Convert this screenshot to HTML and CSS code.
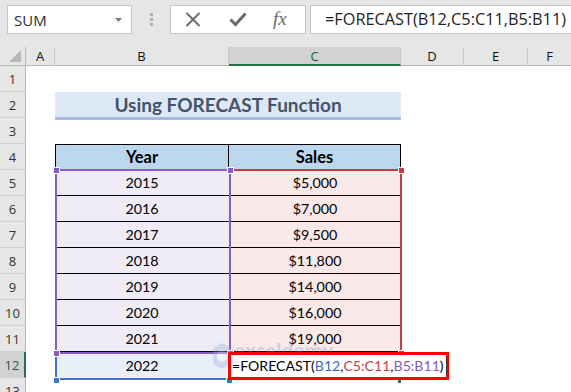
FILE: index.html
```html
<!DOCTYPE html>
<html>
<head>
<meta charset="utf-8">
<link rel="stylesheet" href="styles.css">
</head>
<body>
<div class="toolbar">
  <div class="namebox">
    <span class="nb-text">SUM</span>
    <svg class="nb-arrow" width="7" height="4" viewBox="0 0 7 4"><path d="M0 0H7L3.5 4Z" fill="#7a7a7a"/></svg>
  </div>
  <div class="grip"><i></i><i></i><i></i></div>
  <div class="fxbox">
    <svg class="ic-x" width="16" height="15" viewBox="0 0 16 15"><path d="M1.5 1L14.5 14M14.5 1L1.5 14" stroke="#6b6b6b" stroke-width="2" fill="none"/></svg>
    <svg class="ic-check" width="18" height="15" viewBox="0 0 18 15"><path d="M1.5 7.5L6.5 12.5L16.5 1.5" stroke="#6b6b6b" stroke-width="3" fill="none"/></svg>
    <span class="ic-fx">fx</span>
  </div>
  <div class="formula">=FORECAST(B12,C5:C11,B5:B11)</div>
</div>

<div class="sheet">
  <div class="corner"><span class="tri"></span></div>
  <div class="ch">A</div><div class="ch">B</div><div class="ch sel">C</div><div class="ch">D</div><div class="ch">E</div><div class="ch last">F</div>

  <div class="rh">1</div><div></div><div></div><div></div><div></div><div></div><div></div>
  <div class="rh">2</div><div></div><div class="title">Using FORECAST Function</div><div></div><div></div><div></div>
  <div class="rh">3</div><div></div><div></div><div></div><div></div><div></div><div></div>
  <div class="rh">4</div><div></div><div class="th thb">Year</div><div class="th">Sales</div><div></div><div></div><div></div>
  <div class="rh">5</div><div></div><div class="td tdb">2015</div><div class="td tdc">$5,000</div><div></div><div></div><div></div>
  <div class="rh">6</div><div></div><div class="td tdb">2016</div><div class="td tdc">$7,000</div><div></div><div></div><div></div>
  <div class="rh">7</div><div></div><div class="td tdb">2017</div><div class="td tdc">$9,500</div><div></div><div></div><div></div>
  <div class="rh">8</div><div></div><div class="td tdb">2018</div><div class="td tdc">$11,800</div><div></div><div></div><div></div>
  <div class="rh">9</div><div></div><div class="td tdb">2019</div><div class="td tdc">$14,000</div><div></div><div></div><div></div>
  <div class="rh">10</div><div></div><div class="td tdb">2020</div><div class="td tdc">$16,000</div><div></div><div></div><div></div>
  <div class="rh">11</div><div></div><div class="td tdb">2021</div><div class="td tdc">$19,000</div><div></div><div></div><div></div>
  <div class="rh rsel">12</div><div></div><div class="td b12">2022</div><div></div><div></div><div></div><div></div>
  <div class="rh">13</div><div></div><div></div><div></div><div></div><div></div><div></div>

  <div class="rng rng-red"></div>
  <div class="rng rng-purple"></div>
  <div class="rng rng-blue"></div>

  <span class="hd hd-p" style="left:53px;top:120px"></span>
  <span class="hd hd-p" style="left:227px;top:120px"></span>
  <span class="hd hd-r" style="left:398px;top:120px"></span>
  <span class="hd hd-r" style="left:398px;top:303px"></span>
  <span class="hd hd-p" style="left:53px;top:303px"></span>
  <span class="hd hd-p" style="left:227px;top:303px"></span>
  <span class="hd hd-b" style="left:53px;top:330px"></span>
  <span class="hd hd-b" style="left:226px;top:330px"></span>

  <div class="watermark">
    <svg class="wm-logo" width="20" height="28" viewBox="0 0 20 28"><path d="M10 1L19 6V22L10 27L1 22V6Z" fill="#8fa8d8"/><path d="M10 8L15 11V17L10 20L5 17V11Z" fill="#fff"/></svg>
    <div class="wm-text"><span class="wm-name">exceldemy</span><span class="wm-sub">EXCEL · DATA · BI</span></div>
  </div>

  <div class="edit"><span class="f-k">=FORECAST(</span><span class="f-b">B12</span><span class="f-k">,</span><span class="f-r">C5:C11</span><span class="f-k">,</span><span class="f-p">B5:B11</span><span class="f-k">)</span><span class="caret"></span></div>
  <span class="gmark"></span>
</div>
</body>
</html>
```

FILE: styles.css
```css
html, body {
  margin: 0;
  padding: 0;
}
body {
  width: 571px;
  height: 392px;
  overflow: hidden;
  background: #ffffff;
  font-family: "Open Sans", "Noto Sans", sans-serif;
}

/* ---------- formula bar ---------- */
.toolbar {
  height: 47px;
  box-sizing: border-box;
  padding-top: 5px;
  background: #e6e6e6;
  display: flex;
  align-items: flex-start;
}
.namebox {
  margin-left: 7px;
  width: 125px;
  height: 29px;
  box-sizing: border-box;
  border: 1px solid #c6c6c6;
  background: #fff;
  display: flex;
  align-items: center;
  justify-content: space-between;
  padding: 0 9px 0 6px;
}
.nb-text {
  font-size: 15px;
  color: #2e2e2e;
}
.grip {
  margin-left: 18px;
  margin-top: 8px;
  display: flex;
  flex-direction: column;
  gap: 2px;
}
.grip i {
  display: block;
  width: 3px;
  height: 3px;
  background: #b3b3b3;
}
.fxbox {
  margin-left: 17px;
  width: 136px;
  height: 29px;
  box-sizing: border-box;
  border: 1px solid #c6c6c6;
  background: #fff;
  display: flex;
  align-items: center;
}
.ic-x { margin-left: 14px; }
.ic-check { margin-left: 28px; }
.ic-fx {
  margin-left: 26px;
  font-family: "Liberation Serif", "DejaVu Serif", serif;
  font-style: italic;
  font-size: 19px;
  color: #6b6b6b;
  line-height: 1;
  margin-top: -2px;
}
.formula {
  margin-left: 4px;
  flex: 1;
  height: 29px;
  box-sizing: border-box;
  border: 1px solid #c6c6c6;
  border-right: none;
  background: #fff;
  padding-left: 14px;
  font-size: 16.3px;
  line-height: 26px;
  color: #1e1e1e;
  white-space: nowrap;
}

/* ---------- sheet grid ---------- */
.sheet {
  position: relative;
  display: grid;
  grid-template-columns: 26px 29px 174px 172px 63px 64px 43px;
  grid-template-rows: 19px repeat(13, 26px);
  font-family: "Lato", "Open Sans", sans-serif;
}
.corner {
  position: relative;
  background: #e6e6e6;
  border-right: 1px solid #b9b9b9;
  border-bottom: 1px solid #b9b9b9;
  box-sizing: border-box;
}
.tri {
  position: absolute;
  right: 4px;
  bottom: 3px;
  width: 0;
  height: 0;
  border-left: 12px solid transparent;
  border-bottom: 12px solid #b7b7b7;
}
.ch {
  background: #e6e6e6;
  box-sizing: border-box;
  border-right: 1px solid #c9c9c9;
  border-bottom: 1px solid #b9b9b9;
  font-family: "Open Sans", "Noto Sans", sans-serif;
  font-size: 13px;
  color: #111;
  text-align: center;
  line-height: 18px;
}
.ch.last { border-right: none; }
.ch.sel {
  background: #d2d2d2;
  border-bottom: 2px solid #217346;
  color: #1c5e39;
}
.rh {
  background: #e6e6e6;
  box-sizing: border-box;
  border-right: 1px solid #b9b9b9;
  border-bottom: 1px solid #d0d0d0;
  font-family: "Open Sans", "Noto Sans", sans-serif;
  font-size: 13px;
  color: #333;
  text-align: center;
  line-height: 27px;
}
.rh.rsel {
  background: #d2d2d2;
  border-right: 2px solid #217346;
  color: #2a5a3c;
}

.title {
  grid-column: span 2;
  margin-bottom: -2px;
  background: #dde9f5;
  border-bottom: 3px solid #a7badf;
  color: #44546a;
  font-weight: 700;
  font-size: 19px;
  text-align: center;
  line-height: 25px;
}

.th {
  background: #bdd7ee;
  box-sizing: border-box;
  border-top: 1px solid #000;
  border-right: 1px solid #000;
  font-weight: 700;
  font-size: 16.5px;
  text-align: center;
  line-height: 25px;
  color: #000;
}
.thb { border-left: 1px solid #000; }

.td {
  box-sizing: border-box;
  text-align: center;
  font-size: 14.3px;
  line-height: 26px;
  color: #000;
}
.tdb {
  background: #efebf7;
  border-bottom: 1px solid #000;
}
.tdc {
  background: #f9e9e9;
  border-bottom: 1px solid #000;
}
.b12 {
  background: #e9eff8;
  line-height: 27px;
}

/* ---------- range highlights (overlays) ---------- */
.rng {
  position: absolute;
  box-sizing: border-box;
  pointer-events: none;
}
.rng-red {
  left: 229px;
  top: 122px;
  width: 173px;
  height: 185px;
  border: 2px solid #c43e48;
  border-left: none;
}
.rng-purple {
  left: 55px;
  top: 122px;
  width: 176px;
  height: 185px;
  border: 2px solid #855fc0;
}
.rng-blue {
  left: 55px;
  top: 307px;
  width: 176px;
  height: 26px;
  border: 2px solid #4472c4;
  border-top: none;
}
.hd {
  position: absolute;
  width: 5px;
  height: 5px;
  border: 1px solid #fff;
}
.hd-p { background: #855fc0; }
.hd-r { background: #c43e48; }
.hd-b { background: #4472c4; }

.edit {
  position: absolute;
  left: 228px;
  top: 305px;
  width: 221px;
  height: 28px;
  box-sizing: border-box;
  border: 3px solid #ff0000;
  background: rgba(255, 255, 255, 0.82);
  padding-left: 1px;
  font-size: 14.1px;
  line-height: 22px;
  white-space: nowrap;
  display: flex;
  align-items: center;
}
.f-k { color: #000; }
.f-b { color: #3a6cc4; }
.f-r { color: #c4404a; }
.f-p { color: #7f5cb8; }
.caret {
  display: inline-block;
  width: 1px;
  height: 17px;
  background: #333;
  margin-left: 2px;
}
.gmark {
  position: absolute;
  left: 398px;
  top: 333px;
  width: 3px;
  height: 3px;
  background: #217346;
}

.watermark {
  position: absolute;
  left: 212px;
  top: 295px;
  display: flex;
  align-items: flex-start;
  gap: 2px;
  opacity: 0.3;
  pointer-events: none;
}
.wm-text {
  display: flex;
  flex-direction: column;
  line-height: 1;
}
.wm-name {
  font-family: "Open Sans", sans-serif;
  font-weight: 700;
  font-size: 19px;
  color: #7d98cc;
  letter-spacing: -0.3px;
}
.wm-sub {
  margin-top: 3px;
  font-family: "Open Sans", sans-serif;
  font-size: 7px;
  color: #7d98cc;
  letter-spacing: 1px;
}
```
